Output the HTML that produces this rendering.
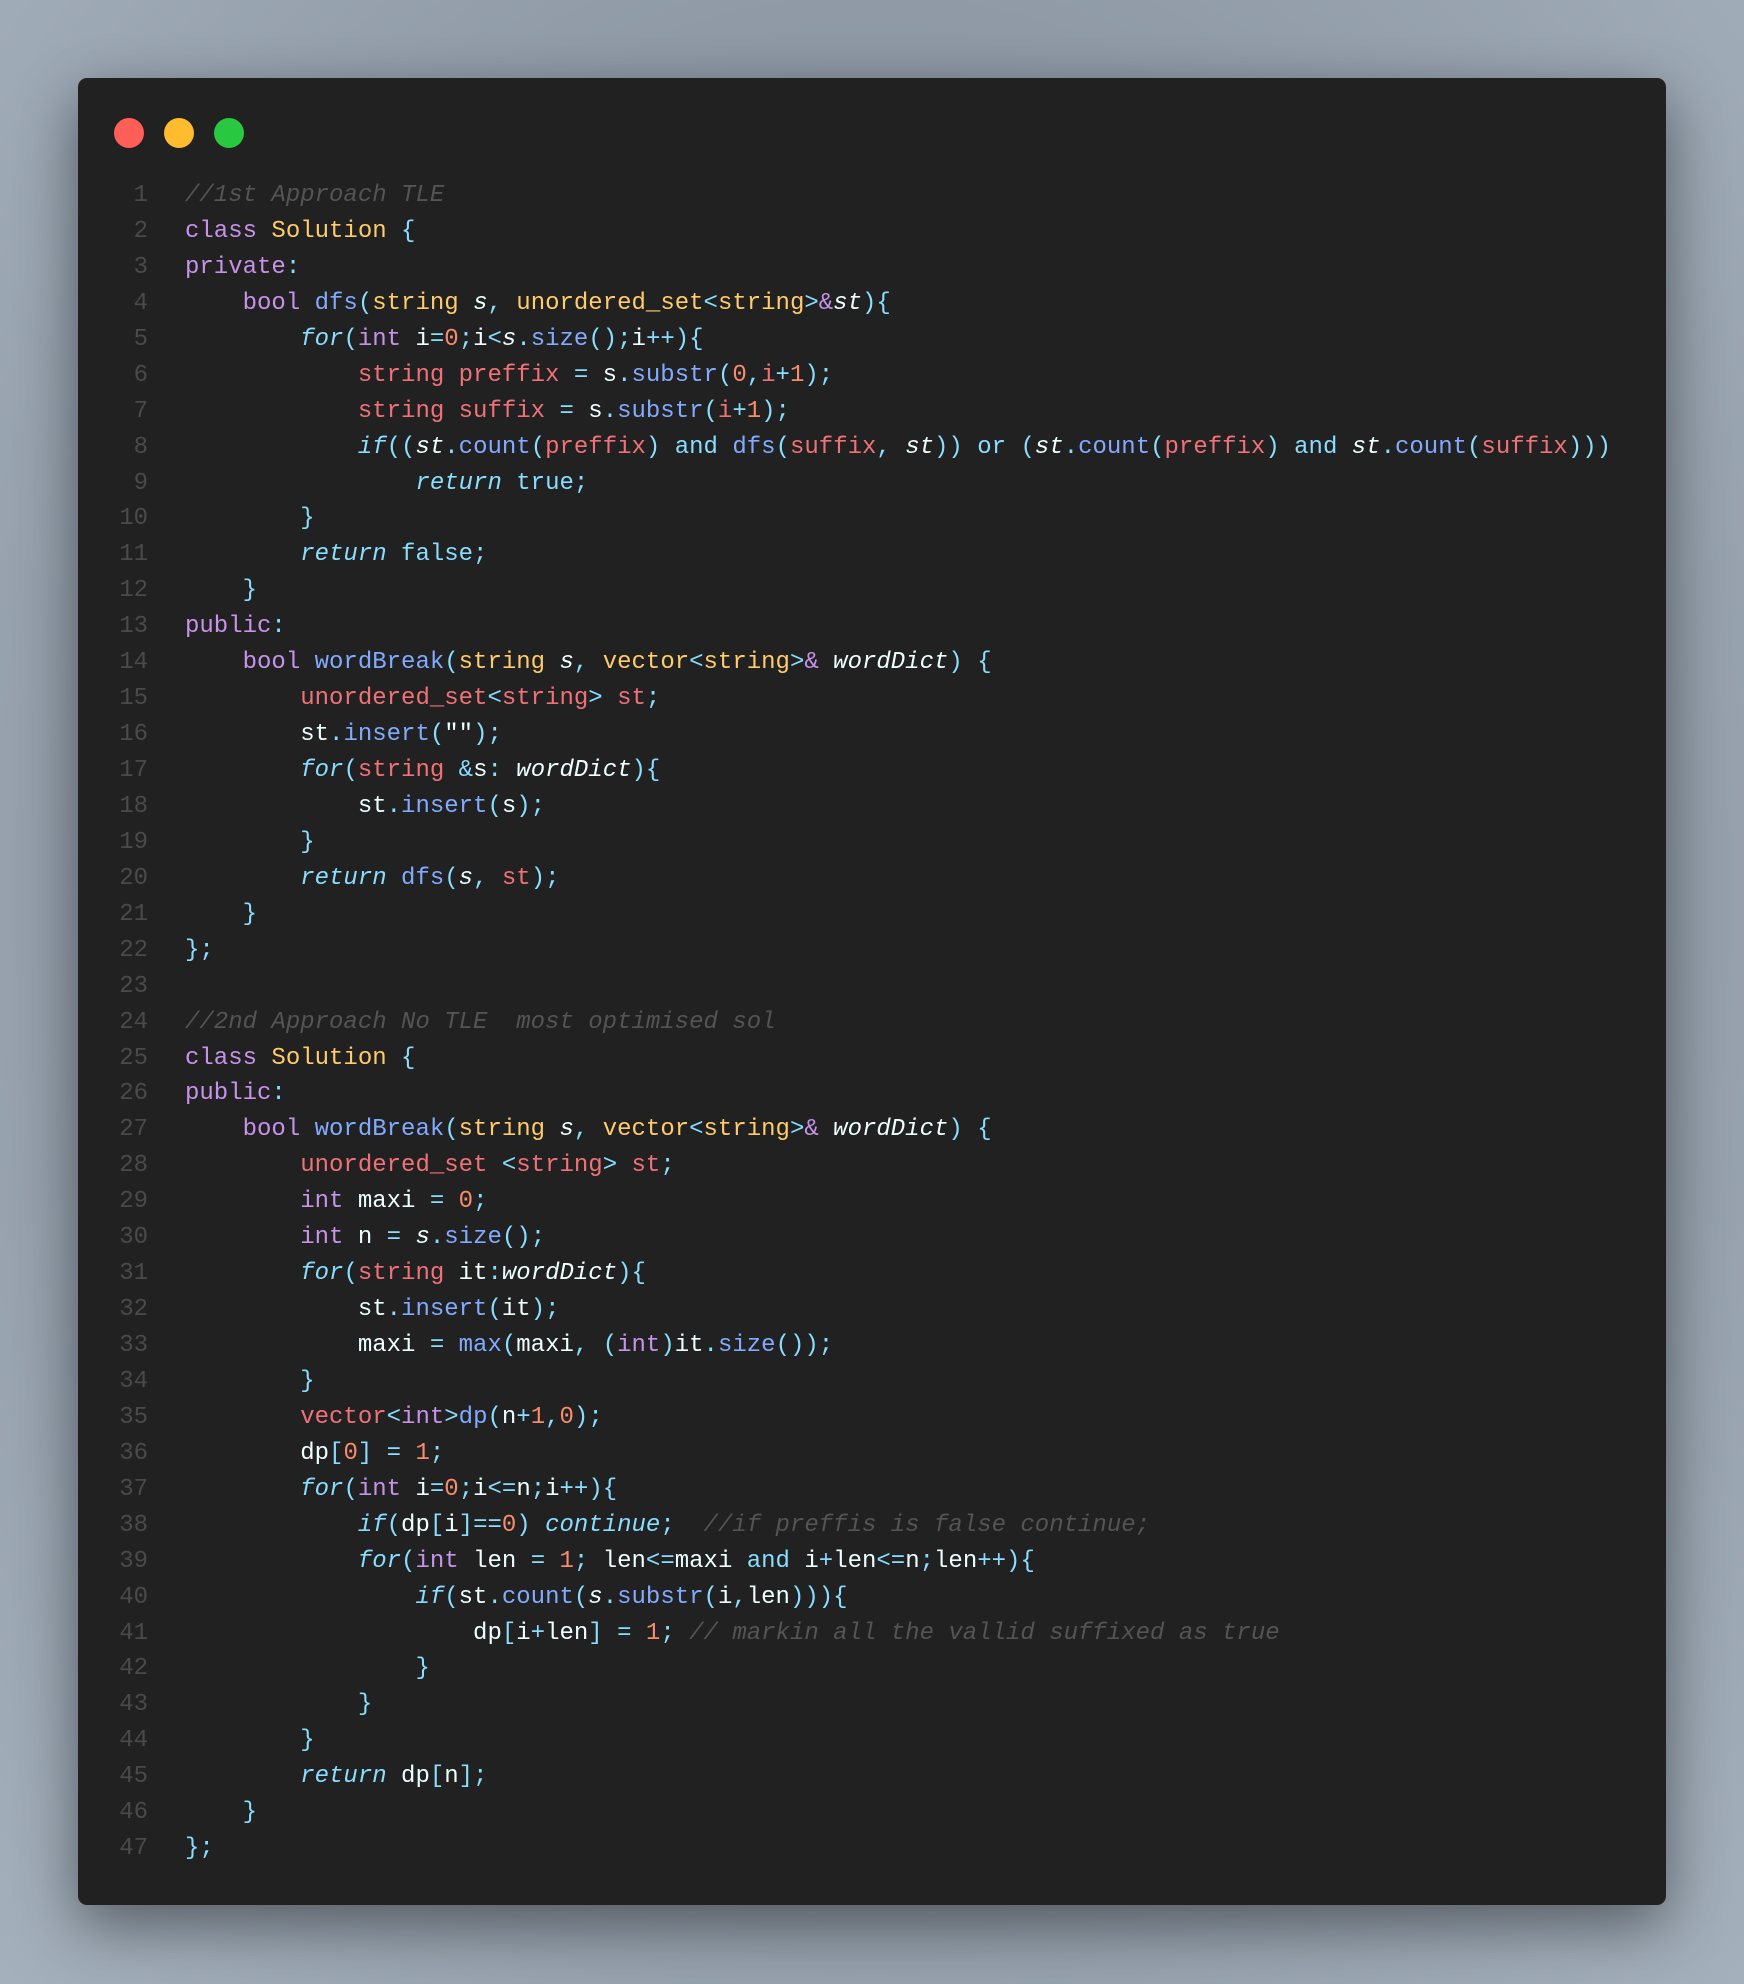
<!DOCTYPE html>
<html><head><meta charset="utf-8"><style>
html,body{margin:0;padding:0;width:1744px;height:1984px;overflow:hidden;
background:radial-gradient(ellipse at 50% 45%,#7a8591 0%,#8e99a5 55%,#a4b0bc 100%);}
.win{position:absolute;left:78px;top:78px;width:1588px;height:1827px;background:#212121;border-radius:9px;
box-shadow:0 20px 60px rgba(0,0,0,.45);}
.dot{position:absolute;top:118px;width:30px;height:30px;border-radius:50%;}
pre{position:absolute;margin:0;top:178px;font-family:"Liberation Mono",monospace;font-size:24px;line-height:35.93px;color:#eeffff;}
.ln{left:110px;width:38px;text-align:right;color:#4a4a4a;}
.code{left:185px;}
.c{color:#545454;font-style:italic}
.k{color:#c792ea}.y{color:#ffcb6b}.p{color:#89ddff}.f{color:#82aaff}.r{color:#f07178}.n{color:#f78c6c}
.w{font-style:italic;color:#eeffff}.ki{font-style:italic;color:#89ddff}
</style></head><body>
<div class="win"></div>
<div class="dot" style="left:114px;background:#ff5f57"></div>
<div class="dot" style="left:164px;background:#febc2e"></div>
<div class="dot" style="left:214px;background:#28c840"></div>
<pre class="ln">1
2
3
4
5
6
7
8
9
10
11
12
13
14
15
16
17
18
19
20
21
22
23
24
25
26
27
28
29
30
31
32
33
34
35
36
37
38
39
40
41
42
43
44
45
46
47</pre>
<pre class="code"><span class="c">//1st Approach TLE</span>
<span class="k">class</span> <span class="y">Solution</span> <span class="p">{</span>
<span class="k">private</span><span class="p">:</span>
    <span class="k">bool</span> <span class="f">dfs</span><span class="p">(</span><span class="y">string</span> <span class="w">s</span><span class="p">,</span> <span class="y">unordered_set</span><span class="p">&lt;</span><span class="y">string</span><span class="p">&gt;</span><span class="k">&amp;</span><span class="w">st</span><span class="p">){</span>
        <span class="ki">for</span><span class="p">(</span><span class="k">int</span> i<span class="p">=</span><span class="n">0</span><span class="p">;</span>i<span class="p">&lt;</span><span class="w">s</span><span class="p">.</span><span class="f">size</span><span class="p">();</span>i<span class="p">++){</span>
            <span class="r">string preffix</span> <span class="p">=</span> s<span class="p">.</span><span class="f">substr</span><span class="p">(</span><span class="n">0</span><span class="p">,</span><span class="r">i</span><span class="p">+</span><span class="n">1</span><span class="p">);</span>
            <span class="r">string suffix</span> <span class="p">=</span> s<span class="p">.</span><span class="f">substr</span><span class="p">(</span><span class="r">i</span><span class="p">+</span><span class="n">1</span><span class="p">);</span>
            <span class="ki">if</span><span class="p">((</span><span class="w">st</span><span class="p">.</span><span class="f">count</span><span class="p">(</span><span class="r">preffix</span><span class="p">)</span> <span class="p">and</span> <span class="f">dfs</span><span class="p">(</span><span class="r">suffix</span><span class="p">,</span> <span class="w">st</span><span class="p">))</span> <span class="p">or</span> <span class="p">(</span><span class="w">st</span><span class="p">.</span><span class="f">count</span><span class="p">(</span><span class="r">preffix</span><span class="p">)</span> <span class="p">and</span> <span class="w">st</span><span class="p">.</span><span class="f">count</span><span class="p">(</span><span class="r">suffix</span><span class="p">)))</span>
                <span class="ki">return</span> <span class="p">true;</span>
        <span class="p">}</span>
        <span class="ki">return</span> <span class="p">false;</span>
    <span class="p">}</span>
<span class="k">public</span><span class="p">:</span>
    <span class="k">bool</span> <span class="f">wordBreak</span><span class="p">(</span><span class="y">string</span> <span class="w">s</span><span class="p">,</span> <span class="y">vector</span><span class="p">&lt;</span><span class="y">string</span><span class="p">&gt;</span><span class="k">&amp;</span> <span class="w">wordDict</span><span class="p">)</span> <span class="p">{</span>
        <span class="r">unordered_set</span><span class="p">&lt;</span><span class="r">string</span><span class="p">&gt;</span> <span class="r">st</span><span class="p">;</span>
        st<span class="p">.</span><span class="f">insert</span><span class="p">(</span>""<span class="p">);</span>
        <span class="ki">for</span><span class="p">(</span><span class="r">string</span> <span class="p">&amp;</span>s<span class="p">:</span> <span class="w">wordDict</span><span class="p">){</span>
            st<span class="p">.</span><span class="f">insert</span><span class="p">(</span>s<span class="p">);</span>
        <span class="p">}</span>
        <span class="ki">return</span> <span class="f">dfs</span><span class="p">(</span><span class="w">s</span><span class="p">,</span> <span class="r">st</span><span class="p">);</span>
    <span class="p">}</span>
<span class="p">};</span>

<span class="c">//2nd Approach No TLE  most optimised sol</span>
<span class="k">class</span> <span class="y">Solution</span> <span class="p">{</span>
<span class="k">public</span><span class="p">:</span>
    <span class="k">bool</span> <span class="f">wordBreak</span><span class="p">(</span><span class="y">string</span> <span class="w">s</span><span class="p">,</span> <span class="y">vector</span><span class="p">&lt;</span><span class="y">string</span><span class="p">&gt;</span><span class="k">&amp;</span> <span class="w">wordDict</span><span class="p">)</span> <span class="p">{</span>
        <span class="r">unordered_set</span> <span class="p">&lt;</span><span class="r">string</span><span class="p">&gt;</span> <span class="r">st</span><span class="p">;</span>
        <span class="k">int</span> maxi <span class="p">=</span> <span class="n">0</span><span class="p">;</span>
        <span class="k">int</span> n <span class="p">=</span> <span class="w">s</span><span class="p">.</span><span class="f">size</span><span class="p">();</span>
        <span class="ki">for</span><span class="p">(</span><span class="r">string</span> it<span class="p">:</span><span class="w">wordDict</span><span class="p">){</span>
            st<span class="p">.</span><span class="f">insert</span><span class="p">(</span>it<span class="p">);</span>
            maxi <span class="p">=</span> <span class="f">max</span><span class="p">(</span>maxi<span class="p">,</span> <span class="p">(</span><span class="k">int</span><span class="p">)</span>it<span class="p">.</span><span class="f">size</span><span class="p">());</span>
        <span class="p">}</span>
        <span class="r">vector</span><span class="p">&lt;</span><span class="k">int</span><span class="p">&gt;</span><span class="f">dp</span><span class="p">(</span>n<span class="p">+</span><span class="n">1</span><span class="p">,</span><span class="n">0</span><span class="p">);</span>
        dp<span class="p">[</span><span class="n">0</span><span class="p">]</span> <span class="p">=</span> <span class="n">1</span><span class="p">;</span>
        <span class="ki">for</span><span class="p">(</span><span class="k">int</span> i<span class="p">=</span><span class="n">0</span><span class="p">;</span>i<span class="p">&lt;=</span>n<span class="p">;</span>i<span class="p">++){</span>
            <span class="ki">if</span><span class="p">(</span>dp<span class="p">[</span>i<span class="p">]==</span><span class="n">0</span><span class="p">)</span> <span class="ki">continue</span><span class="p">;</span>  <span class="c">//if preffis is false continue;</span>
            <span class="ki">for</span><span class="p">(</span><span class="k">int</span> len <span class="p">=</span> <span class="n">1</span><span class="p">;</span> len<span class="p">&lt;=</span>maxi <span class="p">and</span> i<span class="p">+</span>len<span class="p">&lt;=</span>n<span class="p">;</span>len<span class="p">++){</span>
                <span class="ki">if</span><span class="p">(</span>st<span class="p">.</span><span class="f">count</span><span class="p">(</span><span class="w">s</span><span class="p">.</span><span class="f">substr</span><span class="p">(</span>i<span class="p">,</span>len<span class="p">))){</span>
                    dp<span class="p">[</span>i<span class="p">+</span>len<span class="p">]</span> <span class="p">=</span> <span class="n">1</span><span class="p">;</span> <span class="c">// markin all the vallid suffixed as true</span>
                <span class="p">}</span>
            <span class="p">}</span>
        <span class="p">}</span>
        <span class="ki">return</span> dp<span class="p">[</span>n<span class="p">];</span>
    <span class="p">}</span>
<span class="p">};</span></pre>
</body></html>
